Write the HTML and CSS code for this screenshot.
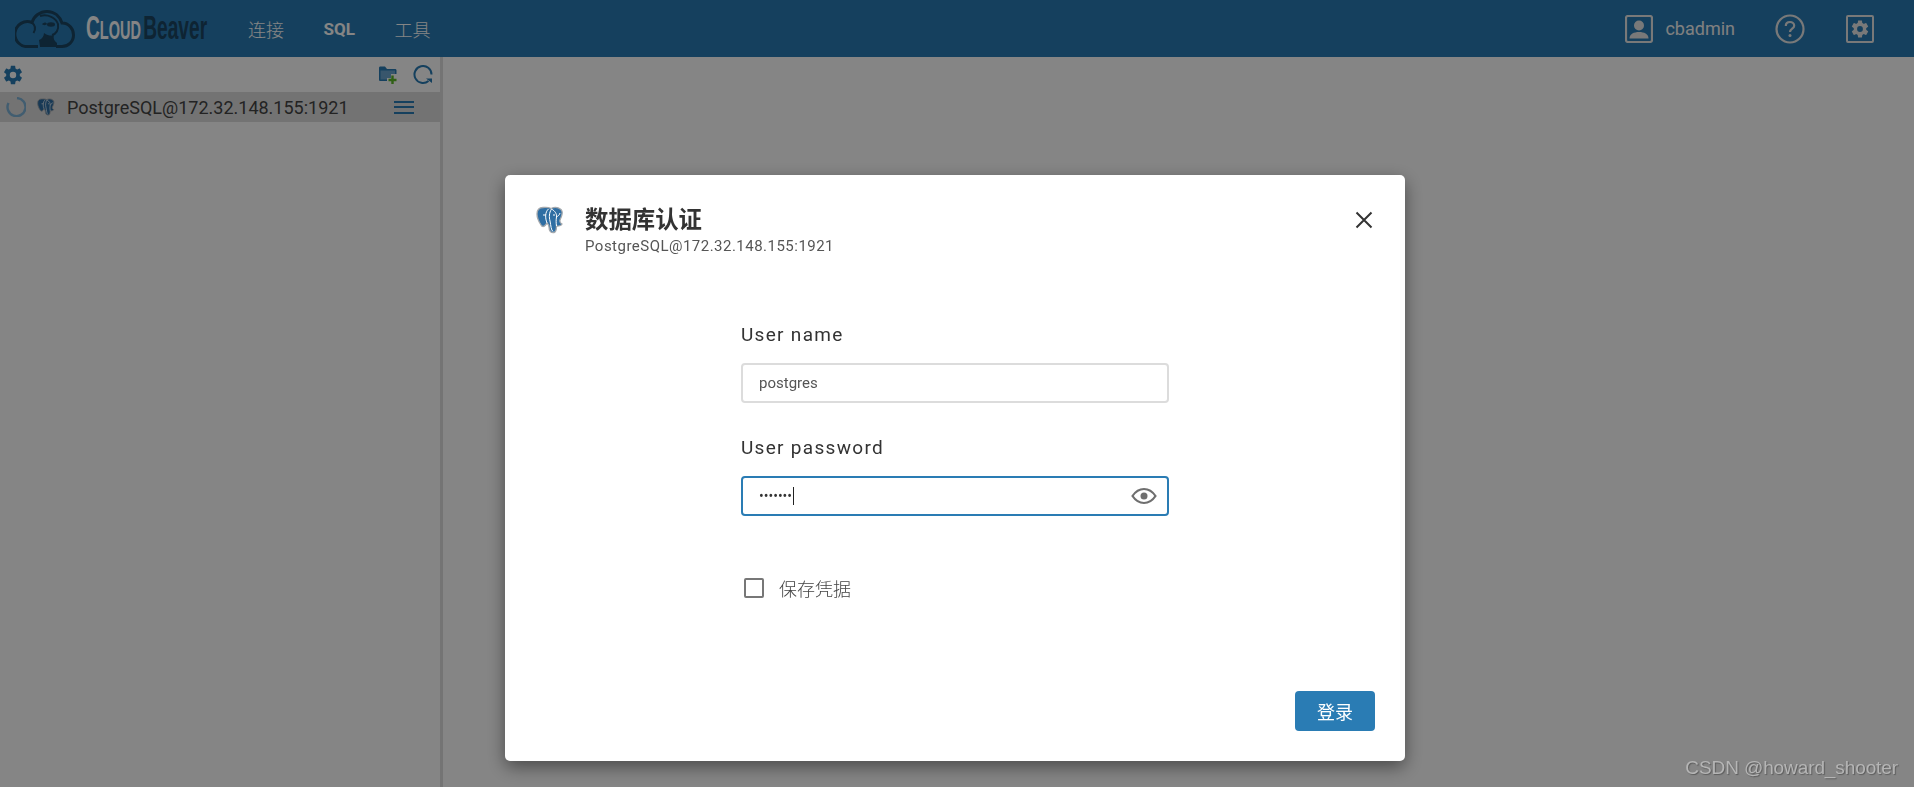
FILE: index.html
```html
<!DOCTYPE html>
<html lang="zh">
<head>
<meta charset="utf-8">
<title>CloudBeaver</title>
<link rel="stylesheet" href="styles.css">
</head>
<body>
<svg class="defs" width="0" height="0" aria-hidden="true">
  <symbol id="pg" viewBox="0 0 28 28">
    <path class="pg-fill" d="M7 1.500C3 1.500 1 4 1 8C1 12 3 16 5 19C6 21 8 21 9.500 19L11 17C12 18 13 19 13 21C13 25 15 27 18 26.500C20 26 20.500 23 20.500 20C22 20.500 26 19.500 26 18C24 17 23.500 16 24 14C26 10 27.500 6 25 3.500C22 1 18 1 15 2.500C12 1 10 1.500 7 1.500Z"/>
    <path class="pg-line" d="M12.500 3C9 6 9 12 11 17M15.500 3C13 7 13 11 14 15C15 20 15 24 17 25.500M15.500 3C19 5 21 8 20.500 11C20 14 20 17 20.500 20M20.500 11C22 10 23.500 9 24 7M7 9H10M17 9H19"/>
  </symbol>
  <symbol id="gear" viewBox="0 0 24 24">
    <path d="M19.400 13c.040-.330.060-.660.060-1s-.020-.670-.060-1l2.160-1.680c.200-.150.250-.430.120-.650l-2.050-3.550c-.120-.220-.390-.310-.620-.220l-2.550 1.020c-.530-.400-1.100-.740-1.730-1l-.380-2.710C14.310 2 14.100 1.800 13.850 1.800h-3.700c-.250 0-.460.200-.500.410l-.380 2.710c-.630.260-1.200.600-1.730 1L4.990 4.900c-.230-.090-.500 0-.620.220L2.320 8.670c-.130.220-.080.500.120.650L4.600 11c-.040.330-.060.670-.060 1s.020.670.060 1l-2.160 1.680c-.200.150-.250.430-.120.650l2.050 3.550c.120.220.390.310.620.220l2.550-1.020c.530.400 1.100.740 1.730 1l.380 2.710c.040.210.250.410.500.410h3.700c.250 0 .460-.200.500-.410l.380-2.710c.630-.260 1.200-.600 1.730-1l2.550 1.020c.230.090.500 0 .620-.220l2.050-3.550c.130-.220.080-.500-.120-.650L19.400 13ZM12 15.500A3.500 3.500 0 1 1 12 8.500a3.500 3.500 0 0 1 0 7Z"/>
  </symbol>
</svg>

<div class="app">
  <header class="topbar">
    <svg class="logo-mark" viewBox="0 0 60 38" width="60" height="38" aria-hidden="true">
      <path class="logo-line" d="M23 36.500H14A12.500 12.500 0 1 1 17 12.500C19 6 25 1.500 32 1.500C40 1.500 45 7 47 13C54 13 58.500 19 58.500 25C58.500 32 53 36.500 47 36.500H41"/>
      <path class="logo-line thin" d="M17 12.500C20 15 21 19 18.500 23M25 6C33 3.500 41 8 43 14C44 20 41 24 37 25"/>
      <path class="logo-solid" d="M24 30C27 29 29 26 29 23C33 26 37 26 39 25C38 28 39 31 42 33V37H25Z"/>
      <ellipse class="logo-solid" cx="36" cy="14.500" rx="4" ry="2.200"/>
      <path class="logo-solid" d="M27 14C29 12 31 12 32 14C31 15.500 28 15.500 27 14Z"/>
    </svg>
    <div class="logo-text"><span class="logo-cloud">C<small>LOUD</small></span><span class="logo-beaver">Beaver</span></div>
    <nav class="nav">
      <span class="nav-item">连接</span>
      <span class="nav-item nav-sql">SQL</span>
      <span class="nav-item">工具</span>
    </nav>
    <div class="top-right">
      <div class="user">
        <svg class="top-icon" viewBox="0 0 28 28" width="28" height="28" aria-hidden="true">
          <rect class="icon-stroke" x="1" y="1" width="26" height="26" rx="2"/>
          <circle class="icon-solid" cx="14" cy="10.500" r="5"/>
          <path class="icon-solid" d="M4.500 23.500C4.500 19 9 17 14 17C19 17 23.500 19 23.500 23.500Z"/>
        </svg>
        <span class="user-name">cbadmin</span>
      </div>
      <svg class="top-icon help" viewBox="0 0 30 30" width="30" height="30" aria-hidden="true">
        <circle class="icon-stroke" cx="15" cy="15" r="13.500"/>
        <path class="icon-stroke" d="M10.800 12C10.800 9.500 12.700 8 15 8C17.300 8 19.200 9.500 19.200 11.700C19.200 14.500 15 14.800 15 18"/>
        <circle class="icon-solid" cx="15" cy="21.500" r="1.500"/>
      </svg>
      <div class="settings-box"><svg class="box-gear" width="20" height="20"><use href="#gear"/></svg></div>
    </div>
  </header>

  <div class="workspace">
    <aside class="sidebar">
      <div class="side-tools">
        <svg class="tool-gear" width="22" height="22"><use href="#gear"/></svg>
        <svg class="tool-folder" viewBox="0 0 20 20" width="20" height="20" aria-hidden="true">
          <path class="folder-tab" d="M1 3C1 2 1.500 1.500 2.500 1.500H7L9 4H17C18 4 18.500 4.500 18.500 5.500V9H13V13H9V16H2.500C1.500 16 1 15.500 1 14.500Z"/>
          <path class="folder-body" d="M2.500 5.500H17V9H13V13H9V14.500H2.500Z"/>
          <path class="folder-plus" d="M14.500 10.500V19M10.500 15H18.500"/>
        </svg>
        <svg class="tool-refresh" viewBox="0 0 20 20" width="20" height="20" aria-hidden="true">
          <path class="refresh-line" d="M15.500 16A8.500 8.500 0 1 1 18.500 9.500"/>
          <path class="refresh-tip" d="M13 13.500H19V18Z"/>
        </svg>
      </div>
      <div class="conn-row">
        <svg class="spinner" viewBox="0 0 20 20" width="20" height="20" aria-hidden="true">
          <path class="spinner-arc" d="M11 1.100A9 9 0 1 1 2.500 6"/>
        </svg>
        <svg class="conn-pg" width="18" height="18"><use href="#pg"/></svg>
        <span class="conn-name">PostgreSQL@172.32.148.155:1921</span>
        <span class="burger"><i></i><i></i><i></i></span>
      </div>
    </aside>
    <div class="splitter"></div>
    <main class="main"></main>
  </div>
</div>

<div class="backdrop">
  <section class="modal">
    <header class="modal-head">
      <svg class="modal-pg" width="28" height="28"><use href="#pg"/></svg>
      <div class="modal-titles">
        <h1 class="modal-title">数据库认证</h1>
        <p class="modal-sub">PostgreSQL@172.32.148.155:1921</p>
      </div>
      <svg class="modal-close" viewBox="0 0 18 18" width="18" height="18" aria-hidden="true">
        <path d="M1.500 1.500L16.500 16.500M16.500 1.500L1.500 16.500"/>
      </svg>
    </header>
    <div class="modal-body">
      <div class="form-group">
        <label class="field-label">User name</label>
        <div class="field"><span class="field-value">postgres</span></div>
      </div>
      <div class="form-group">
        <label class="field-label">User password</label>
        <div class="field field-focus">
          <span class="field-value field-dots">•••••••</span><span class="caret"></span>
          <svg class="eye" viewBox="0 0 26 18" width="26" height="18" aria-hidden="true">
            <path class="eye-line" d="M1.500 9C4.500 4.500 8.500 2 13 2C17.500 2 21.500 4.500 24.500 9C21.500 13.500 17.500 16 13 16C8.500 16 4.500 13.500 1.500 9Z"/>
            <circle class="eye-dot" cx="13" cy="9" r="3.500"/>
          </svg>
        </div>
      </div>
      <div class="check-row">
        <span class="checkbox"></span>
        <span class="check-label">保存凭据</span>
      </div>
    </div>
    <footer class="modal-foot">
      <button class="btn-primary" type="button">登录</button>
    </footer>
  </section>
</div>
<div class="watermark">CSDN @howard_shooter</div>
</body>
</html>
```
FILE: styles.css
```css
* { box-sizing: border-box; }
html, body { height: 100%; }
body {
  margin: 0;
  overflow: hidden;
  background: #fff;
  font-family: Roboto, "Noto Sans CJK SC", sans-serif;
  color: #333;
}
.defs { position: absolute; }

.app { height: 787px; display: flex; flex-direction: column; }

.topbar {
  height: 57px;
  flex: none;
  display: flex;
  align-items: center;
  padding-left: 15px;
  background: #2a7cb4;
  color: #fff;
}
.logo-mark { flex: none; }
.logo-line { fill: none; stroke: #1b4562; stroke-width: 3; }
.logo-line.thin { stroke-width: 2; }
.logo-solid { fill: #1b4562; }
.logo-text {
  width: 121px;
  margin-left: 11px;
  font-family: "Liberation Sans", sans-serif;
  font-size: 33px;
  line-height: 36px;
  font-weight: 700;
  white-space: nowrap;
  transform: scaleX(0.58);
  transform-origin: left center;
  display: flex;
  align-items: baseline;
}
.logo-text small { font-size: 25px; }
.logo-cloud { color: #fff; }
.logo-beaver { color: #1b4562; margin-left: 4px; }

.nav { display: flex; align-items: center; margin-left: 41px; gap: 39.500px; }
.nav-item { font-size: 18px; color: #fff; font-family: "Noto Sans CJK SC", sans-serif; font-weight: 300; }
.nav-sql { font-family: Roboto, sans-serif; font-size: 17px; font-weight: 700; }

.top-right { margin-left: auto; display: flex; align-items: center; padding-right: 40px; }
.user { display: flex; align-items: center; gap: 12px; }
.user-name { font-size: 18px; color: #f5f5f5; }
.top-icon { display: block; }
.help { margin-left: 40px; }
.icon-stroke { fill: none; stroke: #e8e8e8; stroke-width: 2.200; }
.icon-solid { fill: #e8e8e8; }
.settings-box {
  width: 28px;
  height: 28px;
  margin-left: 41px;
  border: 2px solid #e8e8e8;
  border-radius: 2px;
  display: flex;
  align-items: center;
  justify-content: center;
}
.box-gear { fill: #e8e8e8; display: block; }

.workspace { flex: 1; display: flex; min-height: 0; }
.sidebar { width: 440px; flex: none; background: #fff; }
.splitter { width: 3px; flex: none; background: #dedede; }
.main { flex: 1; background: #fff; }

.side-tools { height: 35px; display: flex; align-items: center; padding-left: 2px; }
.tool-gear { fill: #2a7cb4; display: block; }
.tool-folder { margin-left: auto; display: block; }
.folder-tab { fill: #2a7cb4; }
.folder-body { fill: #6ba6cf; }
.folder-plus { fill: none; stroke: #5cb82a; stroke-width: 2.400; }
.tool-refresh { margin: 0 7px 0 15px; display: block; }
.refresh-line { fill: none; stroke: #2a7cb4; stroke-width: 2; }
.refresh-tip { fill: #2a7cb4; }

.conn-row {
  height: 30px;
  display: flex;
  align-items: center;
  padding-left: 6px;
  background: #dcdcdc;
}
.spinner { flex: none; display: block; }
.spinner-arc { fill: none; stroke: #7eb2d6; stroke-width: 2.400; }
.conn-pg { flex: none; margin-left: 11px; display: block; }
.conn-name { margin-left: 12px; font-size: 18px; letter-spacing: 0; color: #444; white-space: nowrap; }
.burger { margin-left: auto; margin-right: 26px; display: flex; flex-direction: column; gap: 3.500px; width: 20px; }
.burger i { display: block; height: 2px; background: #2a7cb4; }

.pg-fill { fill: #2f6ea3; stroke: #a5a9ad; stroke-width: 1.300; }
.pg-line { fill: none; stroke: #fff; stroke-width: 1; }

.backdrop {
  position: fixed;
  inset: 0;
  background: rgba(0, 0, 0, .48);
  padding: 175px 0 0 505px;
}
.modal {
  width: 900px;
  height: 586px;
  display: flex;
  flex-direction: column;
  background: #fff;
  border-radius: 5px;
  box-shadow: 0 6px 18px rgba(0, 0, 0, .45);
}
.modal-head { display: flex; align-items: flex-start; padding: 31px 32px 0 32px; }
.modal-pg { flex: none; display: block; margin: 0 0 0 -1px; }
.modal-titles { margin-left: 21px; flex: 1; }
.modal-title {
  margin: -2px 0 0;
  font-family: "Noto Sans CJK SC", sans-serif;
  font-size: 23.400px;
  line-height: 28px;
  font-weight: 700;
  color: #333;
}
.modal-sub { margin: 4px 0 0; font-size: 15px; line-height: 20px; letter-spacing: .48px; color: #555; }
.modal-close { flex: none; display: block; margin: 5px 0 0 0; }
.modal-close path { fill: none; stroke: #333; stroke-width: 2; }

.modal-body { flex: 1; padding: 67px 0 0 236px; }
.form-group { width: 428px; margin-bottom: 33px; }
.field-label { display: block; font-size: 19px; line-height: 24px; font-weight: 400; letter-spacing: 1.300px; color: #333; margin-bottom: 16px; }
.field {
  height: 40px;
  display: flex;
  align-items: center;
  padding: 0 10px 0 16px;
  border: 2px solid #dcdcdc;
  border-radius: 4px;
}
.field-focus { border-color: #2a7cb4; }
.field-value { font-size: 15px; color: #555; }
.field-dots { color: #333; font-size: 14px; letter-spacing: 0; }
.caret { width: 1px; height: 18px; background: #222; margin-left: 1px; }
.eye { margin-left: auto; display: block; }
.eye-line { fill: none; stroke: #6f6f6f; stroke-width: 2.200; }
.eye-dot { fill: #6f6f6f; }

.check-row { display: flex; align-items: center; margin: 60px 0 0 3px; }
.checkbox { width: 20px; height: 20px; border: 2px solid #777; border-radius: 2px; }
.check-label { margin-left: 15px; font-family: "Noto Sans CJK SC", sans-serif; font-size: 18px; line-height: 24px; font-weight: 300; color: #444; }

.modal-foot { display: flex; justify-content: flex-end; padding: 0 30px 30px 0; }
.btn-primary {
  width: 80px;
  height: 40px;
  border: 0;
  border-radius: 4px;
  background: #2a7cb4;
  color: #fff;
  font-family: "Noto Sans CJK SC", sans-serif;
  font-size: 18px;
  font-weight: 400;
  padding: 0;
}

.watermark {
  position: fixed;
  right: 16px;
  bottom: 8px;
  font-family: "Liberation Sans", sans-serif;
  font-size: 19px;
  letter-spacing: -.1px;
  color: #b5b5b5;
  text-shadow: 1px 1px 1px #5c5c5c;
}
```
